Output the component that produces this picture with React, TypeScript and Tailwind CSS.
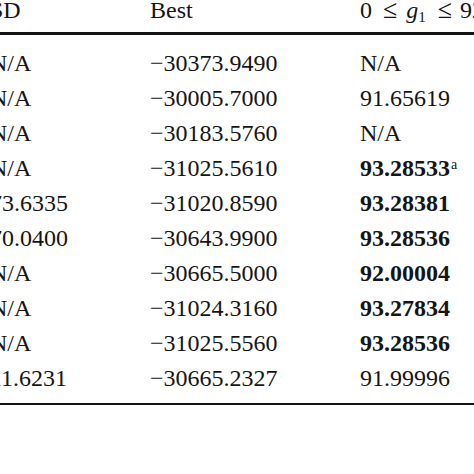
type Row = {
  sd: string;
  best: string;
  g1: string;
  bold?: boolean;
  note?: string;
};

const rows: Row[] = [
  { sd: 'N/A', best: '−30373.9490', g1: 'N/A' },
  { sd: 'N/A', best: '−30005.7000', g1: '91.65619' },
  { sd: 'N/A', best: '−30183.5760', g1: 'N/A' },
  { sd: 'N/A', best: '−31025.5610', g1: '93.28533', bold: true, note: 'a' },
  { sd: '73.6335', best: '−31020.8590', g1: '93.28381', bold: true },
  { sd: '70.0400', best: '−30643.9900', g1: '93.28536', bold: true },
  { sd: 'N/A', best: '−30665.5000', g1: '92.00004', bold: true },
  { sd: 'N/A', best: '−31024.3160', g1: '93.27834', bold: true },
  { sd: 'N/A', best: '−31025.5560', g1: '93.28536', bold: true },
  { sd: '11.6231', best: '−30665.2327', g1: '91.99996' },
];

export default function App() {
  return (
    <div
      className="h-[474px] w-[474px] overflow-hidden bg-white text-[24px] text-[#151515]"
      style={{ fontFamily: '"Liberation Serif", "Times New Roman", serif' }}
    >
      <div className="border-b-[3px] border-[#151515] pb-[12px]">
        <div className="ml-[-10px] grid grid-cols-[160px_210px_1fr] whitespace-nowrap leading-[20px]">
          <span>SD</span>
          <span>Best</span>
          <span>
            0<span className="ml-[11px] mr-[9px] text-[26px]">≤</span>
            <i>g</i>
            <sub className="text-[15px]">1</sub>
            <span className="ml-[12px] mr-[8px] text-[26px]">≤</span>92
          </span>
        </div>
      </div>

      <div className="border-b-2 border-[#151515] pb-[7px] pt-[11px]">
        {rows.map((row, i) => (
          <div
            key={i}
            className="ml-[-10px] grid grid-cols-[160px_210px_1fr] whitespace-nowrap leading-[35px]"
          >
            <span>{row.sd}</span>
            <span>{row.best}</span>
            <span className={row.bold ? 'font-bold' : ''}>
              {row.g1}
              {row.note && <sup className="ml-[1px] text-[14px] font-normal">{row.note}</sup>}
            </span>
          </div>
        ))}
      </div>
    </div>
  );
}
